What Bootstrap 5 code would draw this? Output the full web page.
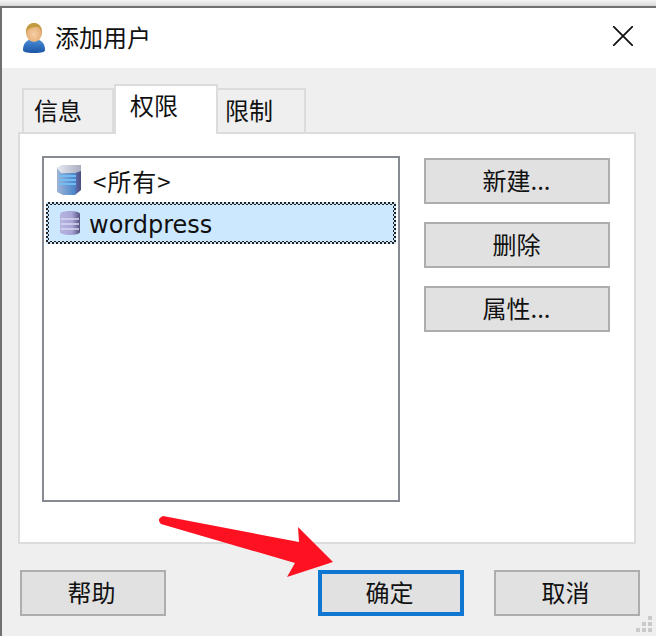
<!DOCTYPE html>
<html lang="zh">
<head>
<meta charset="utf-8">
<title>添加用户</title>
<link href="https://cdn.jsdelivr.net/npm/bootstrap@5.3.0/dist/css/bootstrap.min.css" rel="stylesheet">
<style>
html,body{margin:0;height:636px;overflow:hidden;background:#efefef}
body{font-family:"Noto Sans CJK SC","Liberation Sans",sans-serif;color:#111;font-size:24px;line-height:1}
.shot{position:relative;width:656px;height:636px;overflow:hidden}
.shadow-top{height:6px;background:linear-gradient(#f4f4f4,#d8d8d8)}
.win{height:630px;border-top:2px solid #707070;border-left:2px solid #707070;background:#efefef}
.titlebar{height:60px;background:#fff;padding:0 23px 0 21px}
.title-text{margin-left:10px;font-size:24px;padding-bottom:3px}
.close-x{width:20px;height:20px;margin-bottom:4px}
.dlg-body{padding:16px 0 0 16px}
.tabs-row{height:48px;padding-left:4px;align-items:flex-end}
.tab-item{height:44px;background:#efefef;border:2px solid #dcdcdc;border-bottom:0;padding-left:10px;padding-top:8px;font-size:24px}
.tab-a{width:92px}
.tab-b{width:104px;height:50px;margin-bottom:-2px;background:#fff;padding:7px 0 0 14px;position:relative;z-index:2}
.tab-c{width:88px;padding-left:7px;border-left:0}
.panel-box{width:618px;height:412px;background:#fff;border:2px solid #dcdcdc;padding:22px 24px 0 22px}
.list-box{width:358px;height:346px;border:2px solid #868a93;background:#fff;padding:2px}
.row-all{height:42px;padding-left:10px;font-size:24px;letter-spacing:1px}
.row-all svg{margin-bottom:3px}
.row-all .row-text{margin-left:11px}
.row-sel{height:42px;padding-left:11px;border:3px solid transparent;background:linear-gradient(#cce8ff,#cce8ff) padding-box,repeating-conic-gradient(#222 0 25%,#cce8ff 0 50%) 0 0/4px 4px border-box;font-family:"DejaVu Sans",sans-serif;font-size:24px}
.row-sel .row-text{margin-left:9px;padding-top:3px}
.side-btns{padding-top:2px;gap:18px;width:186px}
.win-btn{display:block;flex-shrink:0;height:46px;width:186px;padding:0 1px 3px 0;background:#e1e1e1;border:2px solid #adadad;border-radius:0;color:#111;font-size:24px;line-height:1;font-family:inherit}
.foot-row{padding:26px 0 0 2px}
.foot-btn{width:146px;padding-right:3px}
.foot-gap{width:152px}
.foot-gap2{width:30px}
.primary-btn{border:4px solid #0f76d2}
.arrow-layer{position:absolute;left:0;top:0;pointer-events:none;z-index:5}
</style>
</head>
<body>
<div class="shot">
  <div class="shadow-top"></div>
  <div class="win">
    <div class="titlebar d-flex align-items-center justify-content-between">
      <div class="d-flex align-items-center">
        <svg width="22" height="30" viewBox="0 0 22 30">
          <defs>
            <linearGradient id="bd" x1="0" y1="0" x2="0" y2="1"><stop offset="0" stop-color="#4b8fd8"/><stop offset="1" stop-color="#1c55a6"/></linearGradient>
            <radialGradient id="hd" cx=".5" cy=".6" r=".6"><stop offset="0" stop-color="#f6cfa6"/><stop offset=".7" stop-color="#e8b27c"/><stop offset="1" stop-color="#b58a3a"/></radialGradient>
          </defs>
          <path d="M0 27c0-7 4-11 11-11s11 4 11 11c0 2-3 3-11 3S0 29 0 27z" fill="url(#bd)"/>
          <ellipse cx="11" cy="9.5" rx="8" ry="9.5" fill="url(#hd)"/>
          <path d="M3 9C3 3 7 0 11 0s8 3 8 9c-1-3-2-5-5-5-4 0-9 1-11 5z" fill="#c29a3f"/>
        </svg>
        <span class="title-text">添加用户</span>
      </div>
      <svg class="close-x" viewBox="0 0 20 20"><path d="M0 0L20 20M20 0L0 20" stroke="#111" stroke-width="1.8" fill="none"/></svg>
    </div>
    <div class="dlg-body">
      <div class="tabs-row d-flex">
        <div class="tab-item tab-a">信息</div>
        <div class="tab-item tab-b">权限</div>
        <div class="tab-item tab-c">限制</div>
      </div>
      <div class="panel-box d-flex justify-content-between">
        <div class="list-box">
          <div class="row-all d-flex align-items-center">
            <svg width="26" height="32" viewBox="0 0 26 32">
              <defs>
                <linearGradient id="cb" x1="0" y1="0" x2="1" y2="0"><stop offset="0" stop-color="#9fb4d6"/><stop offset=".75" stop-color="#4a86cc"/><stop offset=".8" stop-color="#5b6aa8"/><stop offset="1" stop-color="#4a4d80"/></linearGradient>
                <linearGradient id="ct" x1="0" y1="0" x2="1" y2="0"><stop offset="0" stop-color="#e8ebf2"/><stop offset="1" stop-color="#a9adc0"/></linearGradient>
              </defs>
              <path d="M1 4L7 1h18v25l-6 5-12 0-6-3z" fill="url(#cb)"/>
              <path d="M1 4L7 1h18v6l-6 2H5z" fill="url(#ct)"/>
              <path d="M3 12h17M3 16h17M3 20h17" stroke="#6fbdf2" stroke-width="2"/>
            </svg>
            <span class="row-text">&lt;所有&gt;</span>
          </div>
          <div class="row-sel d-flex align-items-center">
            <svg width="20" height="24" viewBox="0 0 20 24">
              <defs><linearGradient id="cy" x1="0" y1="0" x2="1" y2="0"><stop offset="0" stop-color="#b6b4e0"/><stop offset=".6" stop-color="#a7a5d6"/><stop offset="1" stop-color="#54527f"/></linearGradient></defs>
              <path d="M0 3c0-4 20-4 20 0v18c0 4-20 4-20 0z" fill="url(#cy)"/>
              <path d="M1 8h18M1 13h18M1 18h18" stroke="#d9d8ef" stroke-width="1.4"/>
            </svg>
            <span class="row-text">wordpress</span>
          </div>
        </div>
        <div class="side-btns d-flex flex-column">
          <button type="button" class="win-btn">新建...</button>
          <button type="button" class="win-btn">删除</button>
          <button type="button" class="win-btn">属性...</button>
        </div>
      </div>
      <div class="foot-row d-flex">
        <button type="button" class="win-btn foot-btn">帮助</button>
        <div class="foot-gap"></div>
        <button type="button" class="win-btn foot-btn primary-btn">确定</button>
        <div class="foot-gap2"></div>
        <button type="button" class="win-btn foot-btn">取消</button>
      </div>
    </div>
  </div>
  <svg class="arrow-layer" width="656" height="636" viewBox="0 0 656 636">
    <path d="M163 516L299 542 298 527 333 562 287 577 295 563 161 524Q156 519 163 516z" fill="#fe1120"/>
    <g fill="#c9c9c9"><rect x="648" y="616" width="4" height="4"/><rect x="648" y="622" width="4" height="4"/><rect x="642" y="622" width="4" height="4"/><rect x="648" y="628" width="4" height="4"/><rect x="642" y="628" width="4" height="4"/><rect x="636" y="628" width="4" height="4"/></g>
  </svg>
</div>
<script src="https://cdn.jsdelivr.net/npm/bootstrap@5.3.0/dist/js/bootstrap.bundle.min.js"></script>
</body>
</html>
